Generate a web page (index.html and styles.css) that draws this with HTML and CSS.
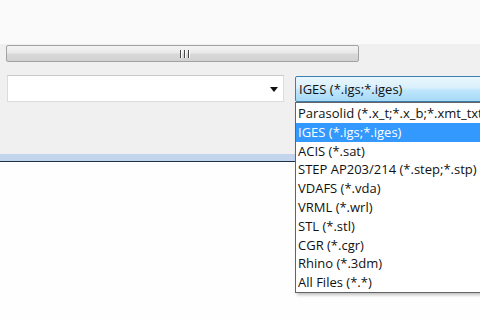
FILE: index.html
```html
<!DOCTYPE html>
<html>
<head>
<meta charset="utf-8">
<link rel="stylesheet" href="styles.css">
</head>
<body>
<div class="page">
  <div class="top"></div>
  <div class="hscroll">
    <div class="thumb"><span class="grip"><i></i><i></i><i></i></span></div>
  </div>
  <div class="panel">
    <div class="combo left">
      <span class="arrow"></span>
    </div>
    <div class="combo right">
      <span class="value">IGES (*.igs;*.iges)</span>
    </div>
  </div>
  <div class="band"></div>
  <div class="content"></div>
  <ul class="dropdown">
    <li>Parasolid (*.x_t;*.x_b;*.xmt_txt;*.xmt_bin)</li>
    <li class="sel">IGES (*.igs;*.iges)</li>
    <li>ACIS (*.sat)</li>
    <li>STEP AP203/214 (*.step;*.stp)</li>
    <li>VDAFS (*.vda)</li>
    <li>VRML (*.wrl)</li>
    <li>STL (*.stl)</li>
    <li>CGR (*.cgr)</li>
    <li>Rhino (*.3dm)</li>
    <li>All Files (*.*)</li>
  </ul>
</div>
</body>
</html>
```

FILE: styles.css
```css
html, body {
  margin: 0;
  padding: 0;
}
body {
  width: 480px;
  height: 320px;
  overflow: hidden;
  background: #fdfdfd;
  font-family: "Open Sans", "Noto Sans", "Liberation Sans", sans-serif;
}
.page {
  position: relative;
  width: 480px;
  height: 320px;
  overflow: hidden;
}
.top {
  height: 44px;
  background: #fafafa;
}
.hscroll {
  height: 19px;
  background: #f0f0f0;
  padding: 1px 0 0 6px;
  box-sizing: border-box;
}
.thumb {
  width: 353px;
  height: 17px;
  box-sizing: border-box;
  border: 1px solid #a2a2a2;
  border-radius: 2px;
  background: linear-gradient(#f4f4f4, #e9e9e9 45%, #d8d8d8 55%, #d2d2d2);
  display: flex;
  justify-content: center;
  align-items: center;
}
.grip {
  display: flex;
  gap: 2px;
  margin-left: 4px;
}
.grip i {
  display: block;
  width: 1px;
  height: 8px;
  background: #444;
  border-right: 1px solid #fff;
}
.panel {
  height: 91px;
  background: #f0f0f0;
  display: flex;
  align-items: flex-start;
  padding: 12px 0 0 7px;
  box-sizing: border-box;
}
.combo {
  box-sizing: border-box;
  height: 27px;
  position: relative;
  flex-shrink: 0;
}
.left {
  width: 277px;
  background: #fff;
  border: 1px solid #dcdcdc;
  border-top-color: #c9c9c9;
}
.arrow {
  position: absolute;
  right: 5px;
  top: 11px;
  width: 0;
  height: 0;
  border-left: 4px solid transparent;
  border-right: 4px solid transparent;
  border-top: 5px solid #111;
}
.right {
  margin-left: 11px;
  margin-top: 1px;
  width: 200px;
  height: 26px;
  border: 1px solid #3c7fb1;
  border-radius: 2px;
  background: linear-gradient(#eaf6fd, #d9f0fc 45%, #bee6fd 55%, #a7d9f5);
  display: flex;
  align-items: center;
  padding-left: 3px;
}
.value {
  font-size: 13px;
  color: #111;
  white-space: nowrap;
}
.band {
  height: 7px;
  background: #c3d5ec;
  border-bottom: 1px solid #1e3147;
}
.content {
  height: 158px;
  background: #fefefe;
}
.dropdown {
  position: absolute;
  left: 295px;
  top: 102px;
  width: 200px;
  margin: 0;
  padding: 1px 0 0 0;
  list-style: none;
  background: #fff;
  border: 1px solid #646464;
  box-shadow: 2px 2px 3px rgba(0, 0, 0, 0.25);
  box-sizing: border-box;
}
.dropdown li {
  height: 18.8px;
  line-height: 18.8px;
  font-size: 13px;
  color: #111;
  padding-left: 2px;
  white-space: nowrap;
  overflow: hidden;
}
.dropdown li.sel {
  background: #3399ff;
  color: #fff;
}
```
